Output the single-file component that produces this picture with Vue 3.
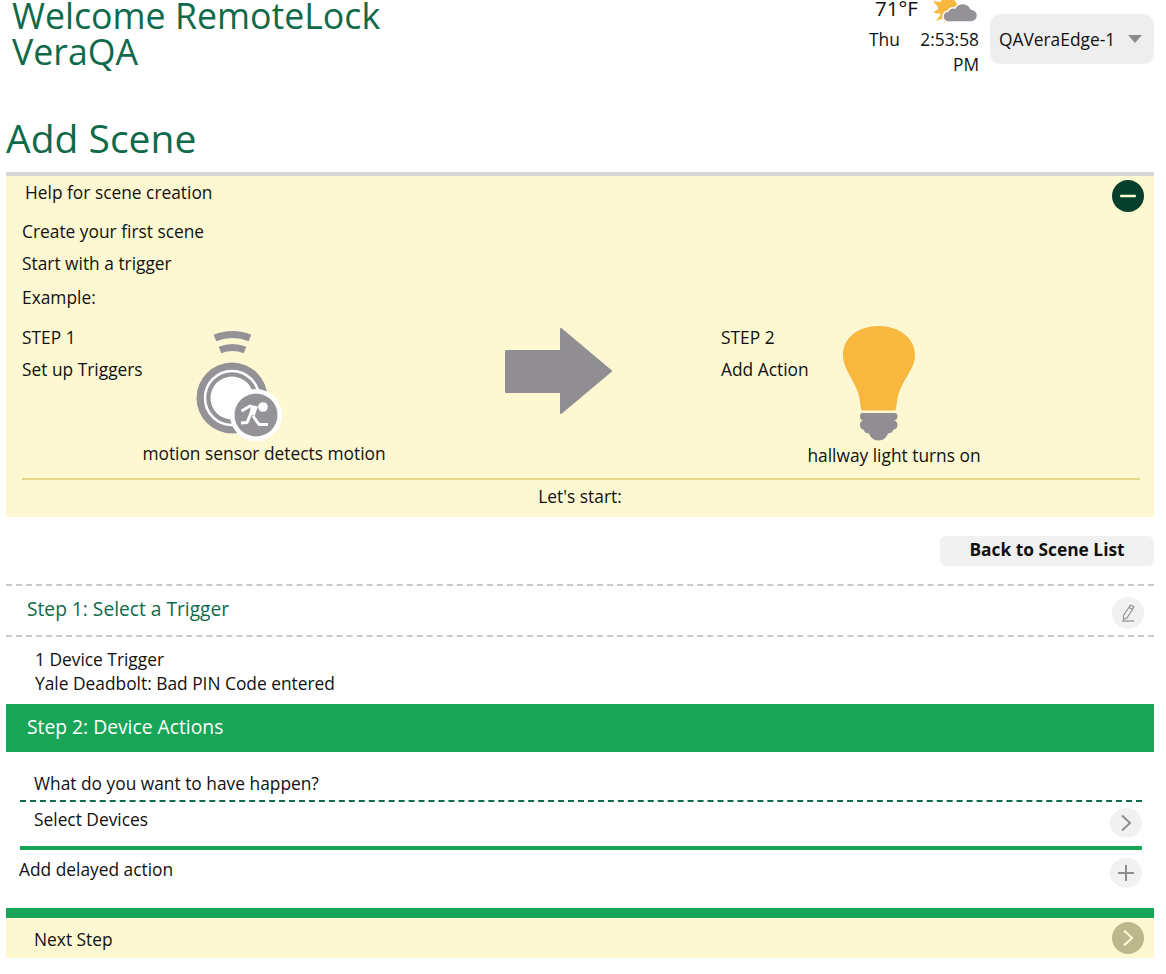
<script setup>
const sensorArcs = ['M215 338 Q232.5 331 250 338', 'M220 350 Q232.5 345 245 350']
</script>

<template>
  <div class="page">
    <header class="top">
      <h2 class="welcome">Welcome RemoteLock VeraQA</h2>
      <div class="status">
        <div class="weather">
          <span class="temp">71°F</span>
          <svg class="wicon" width="46" height="24" viewBox="0 0 46 24">
            <g fill="#f8b73e">
              <circle cx="15" cy="8" r="10" />
              <path d="M0 1 L7 2 L5 7z M0 12 L6 9 L6 14z M3 21 L8 14 L11 18z M11 23 L12 17 L16 19z" />
            </g>
            <path fill="#949296" stroke="#fff" stroke-width="1.5" d="M16 22 A5.5 5.500 0 0 1 15 11 A6 6 0 0 1 22 8 A9 9 0 0 1 38 9 A6.500 6.500 0 0 1 38 22z" />
          </svg>
        </div>
        <div class="clock">
          <span>Thu</span>
          <span class="time">2:53:58 PM</span>
        </div>
      </div>
      <div class="unit">
        <span>QAVeraEdge-1</span>
        <i class="caret"></i>
      </div>
    </header>

    <h1 class="title">Add Scene</h1>

    <section class="help">
      <div class="help-head">
        <span>Help for scene creation</span>
        <span class="circle dark">
          <svg width="16" height="4" viewBox="0 0 16 4"><rect width="16" height="2.6" y="0.7" rx="1" fill="#fdf8d2" /></svg>
        </span>
      </div>
      <p class="line l1">Create your first scene</p>
      <p class="line l2">Start with a trigger</p>
      <p class="line l3">Example:</p>

      <div class="example">
        <div class="step-text">
          <p>STEP 1</p>
          <p>Set up Triggers</p>
        </div>
        <figure class="fig sensor">
          <svg width="170" height="112" viewBox="179 330 170 112" class="fig-svg">
            <path v-for="d in sensorArcs" :key="d" :d="d" fill="none" stroke="#949296" stroke-width="7" />
            <circle cx="232" cy="398" r="35.500" fill="#949296" />
            <circle cx="232" cy="398" r="27" fill="none" stroke="#fff" stroke-width="2.6" />
            <circle cx="232" cy="398" r="21.5" fill="#fff" />
            <circle cx="256" cy="415" r="26" fill="#fff" />
            <circle cx="256" cy="415" r="21.5" fill="#949296" />
            <circle cx="263" cy="407" r="4.8" fill="#fff" />
            <path d="M251 405 L258 406.500 L254.500 416 L249.500 414z" fill="#fff" />
            <path d="M241.500 411 L251 405.500 M251.500 412 L247 422.500 L241 423 M253 416 L259 424.500 L268 424.500" fill="none" stroke="#fff" stroke-width="3" stroke-linejoin="round" />
          </svg>
          <figcaption>motion sensor detects motion</figcaption>
        </figure>
        <svg class="arrow" width="108" height="88" viewBox="0 0 108 88">
          <path fill="#908e92" stroke="#908e92" stroke-width="2" stroke-linejoin="round" d="M1 23 H56 V1 L106 43 L56 85 V64 H1z" />
        </svg>
        <div class="step-text second">
          <p>STEP 2</p>
          <p>Add Action</p>
        </div>
        <figure class="fig bulb">
          <svg width="74" height="116" viewBox="0 0 74 116" class="fig-svg">
            <path fill="#f8b73e" d="M36.5 1 C57 1 73 13 73 30 C73 43 64 50 58 65 C55 72 55 78 54 84 Q53.500 85.500 52 85.500 H21 Q19.500 85.500 19 84 C18 78 18 72 15 65 C9 50 1 43 1 30 C1 13 16 1 36.500 1z" />
            <path fill="#908e92" d="M20 88 H53 Q55.500 88 55.500 91 Q55.500 95 52 95.500 Q55.500 96 55.500 100 Q55.500 104 51 105 Q51 108 46 108.500 Q44 115 36.500 115.500 Q29 115 27 108.500 Q22 108 22 105 Q18 104 18 100 Q18 96 21 95.500 Q18 95 18 91 Q18 88 20 88z" />
          </svg>
          <figcaption>hallway light turns on</figcaption>
        </figure>
      </div>
      <div class="lets">Let's start:</div>
    </section>

    <div class="back-row">
      <button class="back">Back to Scene List</button>
    </div>

    <div class="step-one">
      <span class="step-one-label">Step 1: Select a Trigger</span>
      <span class="circle light">
        <svg width="18" height="20" viewBox="0 0 18 20">
          <path d="M11.500 2 L15 4 L8 15 L4.500 16.500 L4.500 12.500z M10 4.500 L13.500 6.500" fill="none" stroke="#8e8e8e" stroke-width="1.100" />
          <path d="M3 18 H15" stroke="#8e8e8e" stroke-width="1.200" />
        </svg>
      </span>
    </div>
    <div class="trigger">
      <div>1 Device Trigger</div>
      <div>Yale Deadbolt: Bad PIN Code entered</div>
    </div>

    <div class="step-two">Step 2: Device Actions</div>

    <div class="actions">
      <div class="question">What do you want to have happen?</div>
      <div class="devices">
        <span class="row-label">Select Devices</span>
        <span class="circle light">
          <svg width="12" height="18" viewBox="0 0 12 18"><path d="M2 1.500 L10 9 L2 16.500" fill="none" stroke="#8e8e8e" stroke-width="2" /></svg>
        </span>
      </div>
      <div class="delayed">
        <span class="row-label">Add delayed action</span>
        <span class="circle light">
          <svg width="18" height="18" viewBox="0 0 18 18"><path d="M9 1 V17 M1 9 H17" fill="none" stroke="#8e8e8e" stroke-width="2" /></svg>
        </span>
      </div>
    </div>

    <div class="next">
      <span class="next-label">Next Step</span>
      <span class="circle olive">
        <svg width="12" height="18" viewBox="0 0 12 18"><path d="M2 1.500 L10 9 L2 16.500" fill="none" stroke="#fdf8d2" stroke-width="2.200" /></svg>
      </span>
    </div>
  </div>
</template>

<style scoped>
.page {
  box-sizing: border-box;
  width: 1166px;
  height: 974px;
  padding: 0 12px 0 6px;
  overflow: hidden;
  font-family: "Open Sans", "Liberation Sans", sans-serif;
  font-size: 17.35px;
  color: #111;
}
p, h1, h2, figure { margin: 0; font-weight: 400; }

.top { display: flex; height: 100px; align-items: flex-start; }
.welcome {
  width: 400px;
  margin: -3px 0 0 6px;
  font-size: 35.7px;
  line-height: 36px;
  color: #0f6a4a;
  flex: none;
}
.status { width: 119px; margin: -6px 0 0 448px; flex: none; }
.weather { display: flex; height: 32px; align-items: center; padding-left: 15px; }
.temp { font-size: 20.5px; margin-top: -4px; }
.wicon { margin-left: 15px; margin-top: 4px; flex: none; }
.clock { display: flex; margin-top: 1px; line-height: 25px; }
.clock span:first-child { padding-left: 9px; flex: none; }
.time { width: 64px; margin-left: auto; text-align: right; }
.unit {
  display: flex;
  align-items: center;
  justify-content: space-between;
  box-sizing: border-box;
  width: 164px;
  height: 50px;
  margin: 14px 0 0 11px;
  padding: 0 12px 0 9px;
  background: #eeeeee;
  border-radius: 10px;
  flex: none;
}
.caret { border: 7px solid transparent; border-top: 8px solid #8b8b8b; border-bottom: 0; }

.title { height: 72px; font-size: 39px; line-height: 75px; color: #0f6a4a; }

.help {
  box-sizing: border-box;
  height: 345px;
  background: #fdf8d2;
  border-top: 4px solid #d5d5d5;
  padding: 0 14px 0 16px;
}
.help-head {
  display: flex;
  justify-content: space-between;
  align-items: flex-start;
  height: 39px;
  padding: 4px 0 0 3px;
  line-height: 24px;
}
.circle {
  display: flex;
  align-items: center;
  justify-content: center;
  width: 32px;
  height: 32px;
  border-radius: 50%;
  flex: none;
}
.dark { background: #063f2c; margin: 0 -4px 0 0; }
.light { background: #f1f1f1; }
.olive { background: #bdb88b; }
.line { line-height: 24px; }
.l1 { margin-top: 0; }
.l2 { margin-top: 8px; }
.l3 { margin-top: 10px; }

.example { display: flex; height: 153px; margin-top: 16px; align-items: flex-start; }
.step-text { width: 120px; flex: none; line-height: 24px; white-space: nowrap; }
.step-text p { margin-bottom: 8px; }
.step-text.second { margin-left: 108px; width: 88px; }
.fig { display: flex; flex-direction: column; align-items: center; flex: none; }
.sensor { width: 244px; }
.sensor figcaption { margin-top: -1px; white-space: nowrap; }
.fig-svg { display: block; flex: none; }
.sensor .fig-svg { margin-top: 5px; }
.bulb { width: 172px; margin-left: -1px; }
.bulb .fig-svg { margin-top: 0; margin-left: -31px; }
.bulb figcaption { margin-top: 2px; white-space: nowrap; }
.arrow { margin: 3px 0 0 119px; flex: none; }
.lets {
  border-top: 2px solid #e3d88a;
  text-align: center;
  line-height: 32px;
  padding-right: 2px;
}

.back-row { display: flex; justify-content: flex-end; height: 67px; align-items: flex-start; padding-top: 19px; box-sizing: border-box; }
.back {
  width: 214px;
  height: 30px;
  padding: 0 0 3px;
  border: 0;
  border-radius: 6px;
  background: #f1f1f1;
  font: 700 17.35px/27px "Open Sans", "Liberation Sans", sans-serif;
  color: #111;
}
.step-one {
  display: flex;
  justify-content: space-between;
  align-items: center;
  box-sizing: border-box;
  height: 53px;
  padding: 0 10px 0 21px;
  border-top: 2px dashed #c9c9c9;
  border-bottom: 2px dashed #c9c9c9;
  font-size: 19.2px;
  color: #0f6a4a;
}
.step-one-label { margin-bottom: 4px; }
.step-one .circle { margin-top: 5px; }
.trigger { box-sizing: border-box; height: 67px; padding: 10px 0 0 29px; line-height: 24px; }
.step-two {
  height: 48px;
  padding-left: 21px;
  background: #18a558;
  color: #fff;
  font-size: 19.3px;
  line-height: 46px;
}
.actions { height: 156px; padding: 0 12px 0 14px; }
.question { height: 50px; box-sizing: border-box; padding: 19px 0 0 14px; line-height: 25px; border-bottom: 2px dashed #0f6a4a; }
.actions .circle { height: 30px; }
.row-label { margin-top: -1px; }
.devices {
  display: flex;
  justify-content: space-between;
  align-items: flex-start;
  box-sizing: border-box;
  height: 48px;
  padding: 6px 0 0 14px;
  line-height: 24px;
  border-bottom: 4px solid #18a558;
}
.delayed {
  display: flex;
  justify-content: space-between;
  align-items: flex-start;
  margin-left: -1px;
  padding-top: 8px;
  line-height: 24px;
}
.next {
  display: flex;
  justify-content: space-between;
  align-items: center;
  box-sizing: border-box;
  height: 50px;
  padding: 0 10px 0 28px;
  border-top: 10px solid #18a558;
  background: #fdf8d2;
}
.next-label { margin-top: 2px; }
</style>
